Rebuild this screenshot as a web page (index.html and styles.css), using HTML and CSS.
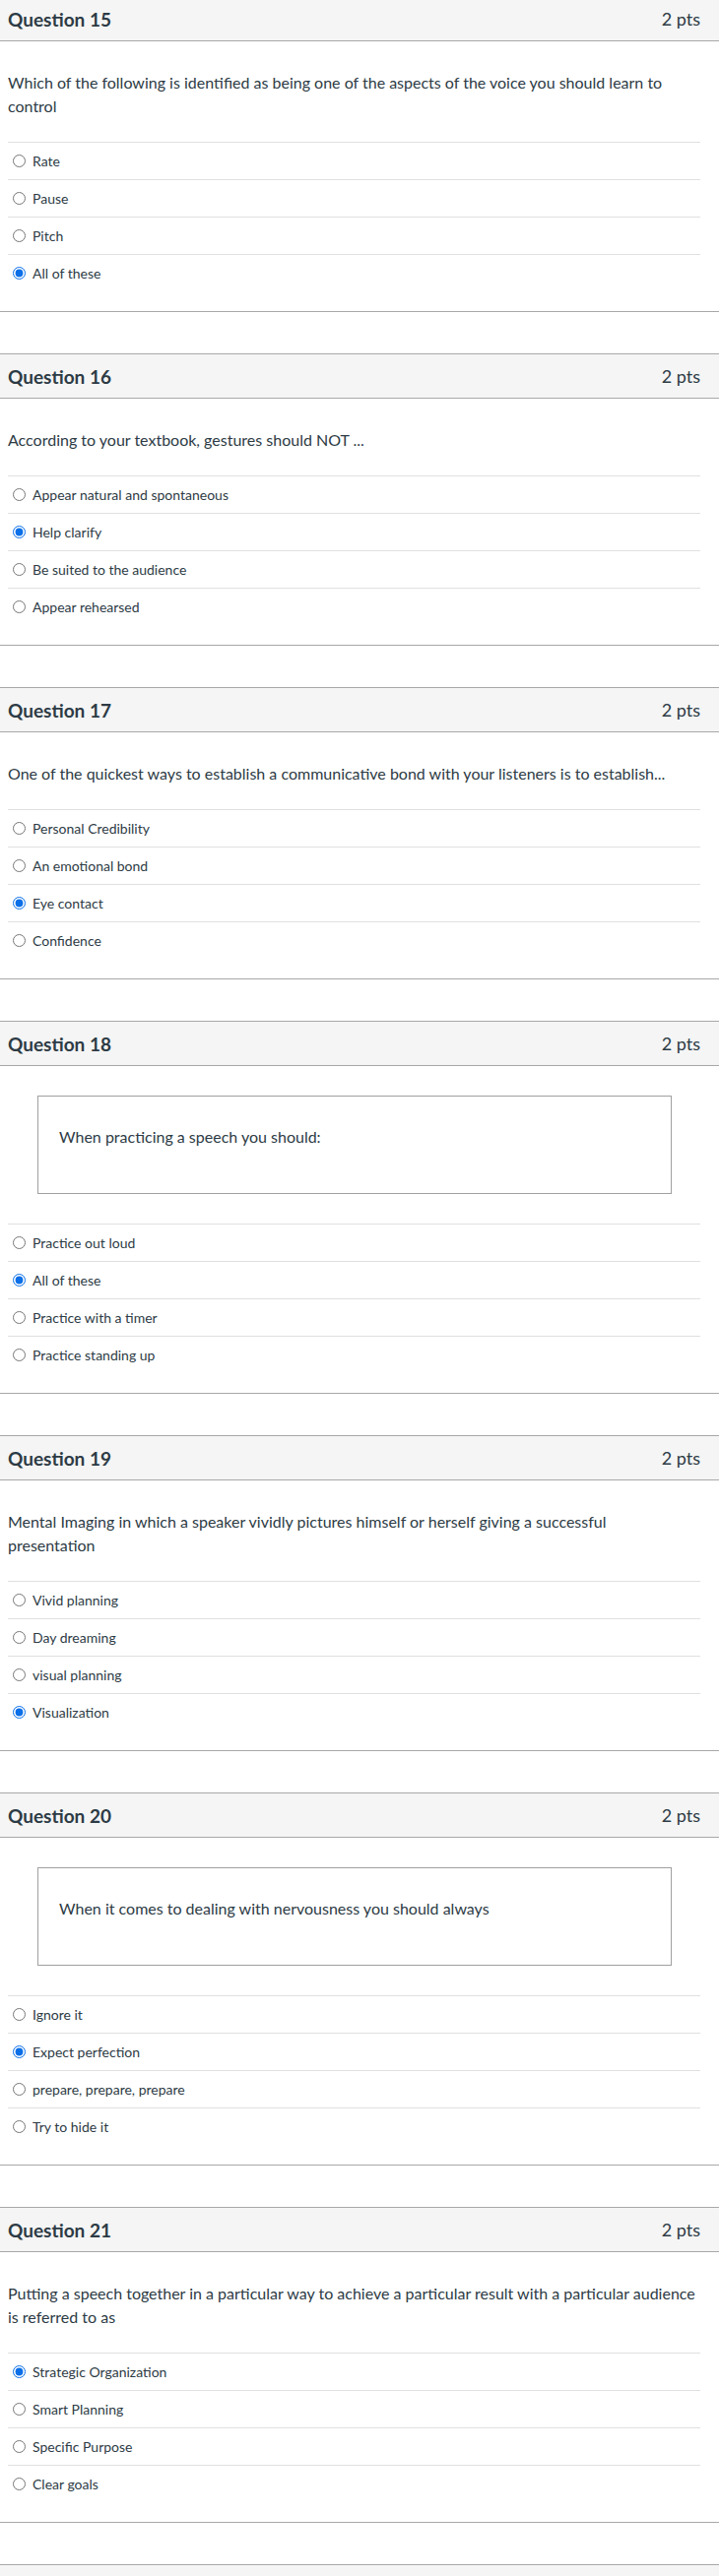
FILE: index.html
```html
<!DOCTYPE html>
<html lang="en">
<head>
    <meta charset="utf-8">
    <title>Quiz</title>
    <link rel="stylesheet" href="styles.css">
</head>
<body>
    <div class="quiz">
        <div class="question">
            <div class="header">
                <span class="name">Question 15</span>
                <span class="points">2 pts</span>
            </div>
            <div class="text">Which of the following is identified as being one of the aspects of the voice you should learn to control</div>
            <div class="answers">
                <label class="answer"><input type="radio" name="q15"> Rate</label>
                <label class="answer"><input type="radio" name="q15"> Pause</label>
                <label class="answer"><input type="radio" name="q15"> Pitch</label>
                <label class="answer"><input type="radio" name="q15" checked> All of these</label>
            </div>
        </div>

        <div class="question">
            <div class="header">
                <span class="name">Question 16</span>
                <span class="points">2 pts</span>
            </div>
            <div class="text">According to your textbook, gestures should NOT ...</div>
            <div class="answers">
                <label class="answer"><input type="radio" name="q16"> Appear natural and spontaneous</label>
                <label class="answer"><input type="radio" name="q16" checked> Help clarify</label>
                <label class="answer"><input type="radio" name="q16"> Be suited to the audience</label>
                <label class="answer"><input type="radio" name="q16"> Appear rehearsed</label>
            </div>
        </div>

        <div class="question">
            <div class="header">
                <span class="name">Question 17</span>
                <span class="points">2 pts</span>
            </div>
            <div class="text">One of the quickest ways to establish a communicative bond with your listeners is to establish...</div>
            <div class="answers">
                <label class="answer"><input type="radio" name="q17"> Personal Credibility</label>
                <label class="answer"><input type="radio" name="q17"> An emotional bond</label>
                <label class="answer"><input type="radio" name="q17" checked> Eye contact</label>
                <label class="answer"><input type="radio" name="q17"> Confidence</label>
            </div>
        </div>

        <div class="question">
            <div class="header">
                <span class="name">Question 18</span>
                <span class="points">2 pts</span>
            </div>
            <div class="text">
                <div class="text-box">When practicing a speech you should:</div>
            </div>
            <div class="answers">
                <label class="answer"><input type="radio" name="q18"> Practice out loud</label>
                <label class="answer"><input type="radio" name="q18" checked> All of these</label>
                <label class="answer"><input type="radio" name="q18"> Practice with a timer</label>
                <label class="answer"><input type="radio" name="q18"> Practice standing up</label>
            </div>
        </div>

        <div class="question">
            <div class="header">
                <span class="name">Question 19</span>
                <span class="points">2 pts</span>
            </div>
            <div class="text">Mental Imaging in which a speaker vividly pictures himself or herself giving a successful presentation</div>
            <div class="answers">
                <label class="answer"><input type="radio" name="q19"> Vivid planning</label>
                <label class="answer"><input type="radio" name="q19"> Day dreaming</label>
                <label class="answer"><input type="radio" name="q19"> visual planning</label>
                <label class="answer"><input type="radio" name="q19" checked> Visualization</label>
            </div>
        </div>

        <div class="question">
            <div class="header">
                <span class="name">Question 20</span>
                <span class="points">2 pts</span>
            </div>
            <div class="text">
                <div class="text-box">When it comes to dealing with nervousness you should always</div>
            </div>
            <div class="answers">
                <label class="answer"><input type="radio" name="q20"> Ignore it</label>
                <label class="answer"><input type="radio" name="q20" checked> Expect perfection</label>
                <label class="answer"><input type="radio" name="q20"> prepare, prepare, prepare</label>
                <label class="answer"><input type="radio" name="q20"> Try to hide it</label>
            </div>
        </div>

        <div class="question">
            <div class="header">
                <span class="name">Question 21</span>
                <span class="points">2 pts</span>
            </div>
            <div class="text">Putting a speech together in a particular way to achieve a particular result with a particular audience is referred to as</div>
            <div class="answers">
                <label class="answer"><input type="radio" name="q21" checked> Strategic Organization</label>
                <label class="answer"><input type="radio" name="q21"> Smart Planning</label>
                <label class="answer"><input type="radio" name="q21"> Specific Purpose</label>
                <label class="answer"><input type="radio" name="q21"> Clear goals</label>
            </div>
        </div>

        <!-- next question header, cut off at the bottom of the page -->
        <div class="question last">
            <div class="header"></div>
        </div>
    </div>
</body>
</html>
```

FILE: styles.css
```css
body {
    font-family: Lato, "Open Sans", sans-serif;
    color: #2d3b45;
    background-color: white;
    margin: 0;
}
.quiz {
    margin-top: -4px;
}
.question {
    border-bottom: 1px solid #a8a8a8;
    margin-bottom: 42px;
}
.question.last {
    border-bottom: none;
    margin-bottom: 0;
}
.header {
    display: flex;
    justify-content: space-between;
    align-items: center;
    height: 44px;
    padding: 0 19px 0 8px;
    background-color: #f5f5f5;
    border-top: 1px solid #a8a8a8;
    border-bottom: 1px solid #a8a8a8;
}
.question.last .header {
    height: 12px;
    border-bottom: none;
}
.header .name {
    font-size: 19px;
    font-weight: bold;
}
.header .points {
    font-size: 18px;
}
.text {
    font-size: 16px;
    line-height: 24px;
    padding: 30px 23px 24px 8px;
}
.text-box {
    border: 1px solid #a0a0a0;
    margin: 0 25px 6px 30px;
    padding: 29px 21px 45px 21px;
}
.answers {
    margin: 0 19px 0 8px;
    padding-bottom: 20px;
}
.answer {
    display: flex;
    align-items: center;
    height: 37px;
    border-top: 1px solid #e0e0e0;
    font-size: 14px;
}
.answer input {
    margin: 0 7px 0 5px;
    width: 13px;
    height: 13px;
    accent-color: #0b6fe8;
}
```
